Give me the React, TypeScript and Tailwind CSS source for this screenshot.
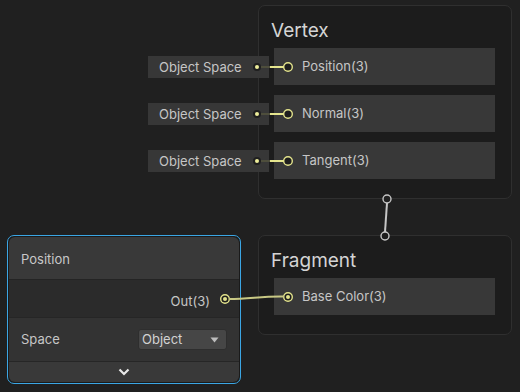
import React from 'react';

const font = { fontFamily: 'Inter, "Noto Sans", sans-serif' };

const PortRing: React.FC<{ filled?: boolean }> = ({ filled }) => (
  <svg width="12" height="12" viewBox="0 0 12 12" className="shrink-0">
    <circle cx="6" cy="6" r="4.3" fill="#1e1e1e" stroke="#e4e48c" strokeWidth="1.4" />
    {filled && <circle cx="6" cy="6" r="2" fill="#e4e48c" />}
  </svg>
);

const VertexRow: React.FC<{ label: string }> = ({ label }) => (
  <div className="h-[37px] bg-[#383838] flex items-center pl-[8px] gap-[8px] text-[13px] text-[#c6c6c6]">
    <PortRing />
    <span className="pt-[1px]">{label}</span>
  </div>
);

const SpaceInput: React.FC = () => (
  <div className="h-[22px] w-[121px] bg-[#373737] flex items-center justify-between pl-[11px] pr-[8px] text-[13px] text-[#c6c6c6]">
    <span className="pt-[1px]">Object Space</span>
    <span className="w-[8px] h-[8px] rounded-full bg-[#1f1f1f] flex items-center justify-center">
      <span className="w-[4px] h-[4px] rounded-full bg-[#eded9a]" />
    </span>
  </div>
);

export default function App() {
  return (
    <div className="relative w-[520px] h-[392px] overflow-hidden bg-[#202020]" style={font}>
      {/* Vertex block */}
      <div className="absolute left-[258px] top-[5px] w-[254px] h-[194px] rounded-[7px] border border-[#2f2f2f] bg-[#1c1c1c]">
        <div className="pl-[12px] pt-[13px] h-[42px] text-[19px] leading-[24px] text-[#d4d4d4]">Vertex</div>
        <div className="flex flex-col gap-[10px] ml-[15px] mr-[16px]">
          <VertexRow label="Position(3)" />
          <VertexRow label="Normal(3)" />
          <VertexRow label="Tangent(3)" />
        </div>
      </div>

      {/* default inputs */}
      <div className="absolute left-[148px] top-[56px] flex flex-col gap-[25px]">
        <SpaceInput />
        <SpaceInput />
        <SpaceInput />
      </div>

      {/* Fragment block */}
      <div className="absolute left-[258px] top-[235px] w-[254px] h-[100px] rounded-[7px] border border-[#2f2f2f] bg-[#1c1c1c]">
        <div className="pl-[12px] pt-[13px] h-[42px] text-[19px] leading-[24px] text-[#d4d4d4]">Fragment</div>
        <div className="ml-[15px] mr-[16px] h-[37px] bg-[#383838] flex items-center pl-[8px] gap-[8px] text-[13px] text-[#c6c6c6]">
          <PortRing filled />
          <span className="pt-[1px]">Base Color(3)</span>
        </div>
      </div>

      {/* Position node */}
      <div className="absolute left-[7px] top-[235px] w-[234px] h-[149px] rounded-[7px] border border-[#3ba6e4] bg-[#1a1a1a] p-[1px] overflow-hidden">
        <div className="flex flex-col h-full rounded-[6px] overflow-hidden">
          <div className="h-[43px] shrink-0 bg-[#393939] flex items-center pl-[12px] pt-[3px] text-[13px] text-[#c8c8c8] border-b border-[#242424]">
            Position
          </div>
          <div className="h-[37px] shrink-0 bg-[#2b2b2b] flex items-center justify-end pr-[8px] gap-[9px] text-[13px] text-[#c6c6c6]">
            <span className="pt-[6px]">Out(3)</span>
            <PortRing filled />
          </div>
          <div className="h-[44px] shrink-0 bg-[#333333] flex items-center justify-between pl-[12px] pr-[12px] text-[13px] text-[#c6c6c6] border-t border-[#262626]">
            <span className="pt-[1px]">Space</span>
            <div className="w-[89px] h-[21px] rounded-[3px] bg-[#464646] border border-[#2e2e2e] flex items-center justify-between pl-[3px] pr-[7px] text-[#d2d2d2]">
              <span>Object</span>
              <svg width="9" height="6" viewBox="0 0 9 6"><path d="M0.5 0.5 L8.5 0.5 L4.5 5.5 Z" fill="#bdbdbd" /></svg>
            </div>
          </div>
          <div className="flex-1 bg-[#393939] flex items-center justify-center border-t border-[#262626]">
            <svg width="12" height="8" viewBox="0 0 12 8"><path d="M1.5 1.5 L6 6 L10.5 1.5" fill="none" stroke="#e8e8e8" strokeWidth="2.2" /></svg>
          </div>
        </div>
      </div>

      {/* connections, drawn over the nodes */}
      <svg className="absolute inset-0 pointer-events-none" width="520" height="392">
        {[67, 114, 161].map((y) => (
          <g key={y}>
            <line x1="261" y1={y} x2="271" y2={y} stroke="#4e4e3c" strokeWidth="2" />
            <line x1="270" y1={y} x2="284" y2={y} stroke="#e6e68e" strokeWidth="2" />
          </g>
        ))}
        <path d="M229 299 C 250 299, 262 296, 284 296.5" fill="none" stroke="#c8c884" strokeWidth="2" />
        <line x1="387" y1="203" x2="385" y2="232" stroke="#c6c6c6" strokeWidth="2" />
        <circle cx="387" cy="199" r="4" fill="#202020" stroke="#c6c6c6" strokeWidth="1.4" />
        <circle cx="385" cy="236" r="4" fill="#1c1c1c" stroke="#c6c6c6" strokeWidth="1.4" />
      </svg>
    </div>
  );
}
